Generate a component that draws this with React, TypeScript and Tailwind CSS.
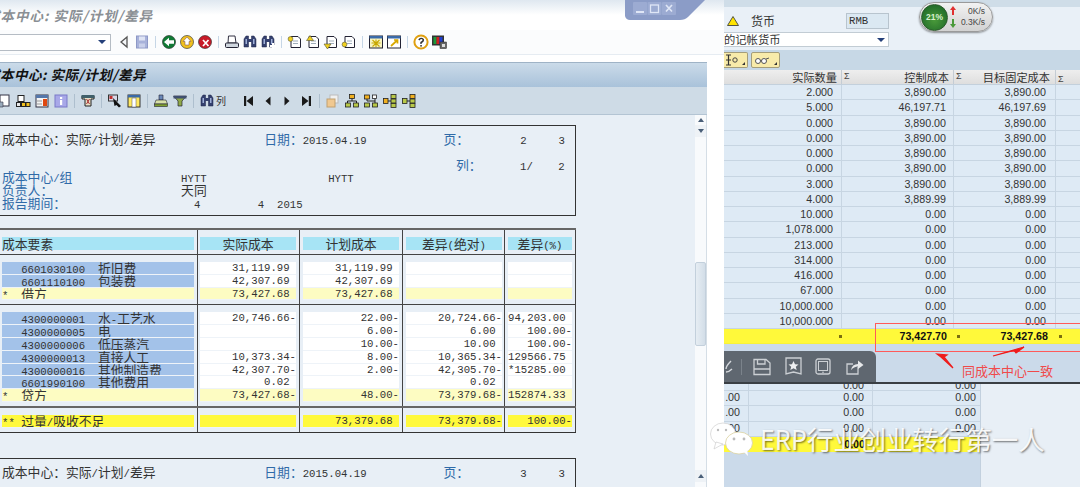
import React from "react";

const MONO = "font-['Liberation_Mono','Noto_Sans_CJK_SC',monospace]";

function M({ s, c = "" }: { s: string; c?: string }) {
  const parts = s.split(/([\u3000-\u30ff\u4e00-\u9fff\uff00-\uffef]+)/);
  return (
    <>
      {parts.map((p, i) =>
        p === "" ? null : i % 2 === 1 ? (
          <span key={i} className={"text-[12.8px] font-['Noto_Sans_CJK_SC',sans-serif] " + c}>{p}</span>
        ) : (
          <span key={i} className={c}>{p}</span>
        )
      )}
    </>
  );
}

const Line = ({ children }: { children?: React.ReactNode }) => (
  <div className="h-[12.8px] leading-[12.8px] whitespace-pre text-[10.67px] text-[#333] overflow-hidden">{children}</div>
);
const BLUE = "text-[#2f6aa8]";

/* ---------- icons ---------- */
const Ic = ({ children, s = 16 }: { children: React.ReactNode; s?: number }) => (
  <svg width={s} height={s} viewBox="0 0 16 16" className="block shrink-0">{children}</svg>
);
const Back = () => <Ic><path d="M11 3 L5 8 L11 13 Z" fill="#f4f6f8" stroke="#555" strokeWidth="1.3" /></Ic>;
const Save = () => <Ic><rect x="2.5" y="2" width="11" height="12" fill="#a8b2da" stroke="#8d98c6" /><rect x="5" y="2.5" width="6" height="4" fill="#dfe4f4" /><rect x="5" y="9.5" width="6" height="4" fill="#c9d0ea" /></Ic>;
const Round = ({ f, children }: { f: string; children: React.ReactNode }) => <Ic><circle cx="8" cy="8" r="6.5" fill={f} stroke="#222" strokeWidth=".6" />{children}</Ic>;
const GreenB = () => <Round f="#107a35"><path d="M3 8 L8 3.8 V6.3 H13 V9.7 H8 V12.2 Z" fill="#fff" /></Round>;
const YellowB = () => <Round f="#f0c020"><path d="M8 3 L12 7.5 H10 V11 H6 V7.5 H4 Z" fill="#fff" stroke="#744" strokeWidth=".5" /></Round>;
const RedB = () => <Round f="#c81a28"><path d="M6 6 L11.5 12 M11.5 6 L6 12" stroke="#fff" strokeWidth="1.7" /></Round>;
const Printer = () => <Ic><path d="M4.5 2 H11 L12 9 H4 Z" fill="#fff" stroke="#334" /><rect x="1.5" y="9" width="13" height="4.5" rx="1" fill="#cfd6de" stroke="#223" /></Ic>;
const Find = ({ plus }: { plus?: boolean }) => <Ic><path d="M2 13 V5 L4 2 H6.5 V13 Z M9.5 13 V2 H12 L14 5 V13 Z" fill="#34406f" stroke="#1c2548" strokeWidth=".5" /><rect x="6" y="5" width="4" height="3" fill="#34406f" /><rect x="3.5" y="5" width="1.5" height="5" fill="#9fb0d8" /><rect x="11" y="5" width="1.5" height="5" fill="#9fb0d8" />{plus ? <path d="M10 12 H16 M13 9 V15" stroke="#fff" strokeWidth="2" /> : null}</Ic>;
const Page = ({ v }: { v: number }) => (
  <Ic>
    <path d="M4 2.5 H11 L13.5 5 V13.5 H4 Z" fill="#fff" stroke="#223" />
    <path d="M6 7 H11 M6 9.5 H11" stroke="#8899aa" strokeWidth=".8" />
    {v === 0 ? <circle cx="3.5" cy="5" r="2.4" fill="#f0d020" stroke="#553" strokeWidth=".6" /> : null}
    {v === 1 ? <path d="M5 1.5 L1.5 6.5 H8.5 Z" fill="#f0d020" stroke="#553" strokeWidth=".6" /> : null}
    {v === 2 ? <path d="M4.5 15 L1 10 H8 Z" fill="#f0d020" stroke="#553" strokeWidth=".6" /> : null}
    {v === 3 ? <circle cx="3.5" cy="10.5" r="2.4" fill="#f0d020" stroke="#553" strokeWidth=".6" /> : null}
  </Ic>
);
const Sel = () => <Ic><rect x="1.5" y="2" width="13" height="12" fill="#f8f4c0" stroke="#223" /><rect x="1.5" y="2" width="13" height="2.5" fill="#3a6aa8" /><path d="M4.5 6 L11.5 12.5 M11.5 6 L4.5 12.5 M8 5.5 V13 M3.5 9 H12.5" stroke="#c8a800" strokeWidth="1.1" /></Ic>;
const Expand = () => <Ic><rect x="1.5" y="2" width="13" height="12" fill="#fff" stroke="#223" /><rect x="1.5" y="2" width="13" height="2.5" fill="#3a6aa8" /><path d="M5 12 L11 6.5 M8 6 H11.5 V9.5" stroke="#d8a800" strokeWidth="1.7" fill="none" /></Ic>;
const Help = () => <Ic><circle cx="8" cy="8" r="6.6" fill="#fff" stroke="#e0a010" strokeWidth="2" /><path d="M5.8 6 Q8 3 10.3 5.5 Q10.5 7.5 8 8.5 V10" stroke="#333" strokeWidth="1.4" fill="none" /><rect x="7.3" y="11" width="1.5" height="1.6" fill="#333" /></Ic>;
const Layout = () => <Ic><rect x="1" y="1.5" width="12" height="10" fill="#333" /><rect x="2.5" y="3" width="3" height="7" fill="#1a9a3a" /><rect x="5.5" y="3" width="3" height="7" fill="#d02020" /><rect x="8.5" y="3" width="3" height="7" fill="#2040d0" /><rect x="9" y="8" width="6.5" height="6.5" fill="#666" stroke="#222" strokeWidth=".5" /><rect x="11" y="10" width="3" height="3" fill="#ddd" /></Ic>;

const Small = ({ k }: { k: number }) => {
  if (k === 0) return <Ic><rect x="4" y="2" width="9" height="11" fill="#fff" stroke="#334" /><path d="M1 9 h6 v5 h-6z" fill="#9ab" stroke="#334" strokeWidth=".6" /></Ic>;
  if (k === 1) return <Ic><rect x="3" y="2.5" width="6" height="6" fill="#fff" stroke="#222" /><rect x="1.5" y="9.5" width="4" height="4" fill="#e8e8e8" stroke="#222" /><rect x="6.5" y="9.5" width="4" height="4" fill="#f0c020" stroke="#222" /><rect x="11" y="9.5" width="4" height="4" fill="#f0c020" stroke="#222" /></Ic>;
  if (k === 2) return <Ic><rect x="2" y="2" width="12" height="12" fill="#f4f4f4" stroke="#334" /><rect x="2" y="2" width="12" height="3" fill="#5577aa" /><rect x="9" y="6" width="4" height="7" fill="#e04810" /><path d="M3 8 H8 M3 11 H8" stroke="#999" /></Ic>;
  if (k === 3) return <Ic><rect x="2" y="2" width="12" height="12" fill="#a8a8e8" stroke="#7a7ac8" /><rect x="7" y="4" width="2.2" height="2" fill="#fff" /><rect x="7" y="7" width="2.2" height="5" fill="#fff" /></Ic>;
  if (k === 4) return <Ic><path d="M2 3 H14 V6 H11 V13 H5 V6 H2 Z" fill="#e8e0c8" stroke="#222" /><rect x="1.5" y="2" width="13" height="3" fill="#40606a" /><path d="M6.5 6 L9.5 11 M9.5 6 L6.5 11" stroke="#a33" /></Ic>;
  if (k === 5) return <Ic><rect x="1.5" y="2" width="9" height="6" fill="#d8d8e8" stroke="#333" /><rect x="2.5" y="3" width="3" height="3" fill="#c03030" /><path d="M6 5 L14 13 L12 14.5 L9.5 12 L7.5 13 Z" fill="#111" /></Ic>;
  if (k === 6) return <Ic><rect x="2" y="2" width="12" height="12" fill="#ffe860" stroke="#333" /><rect x="2" y="2" width="12" height="2.5" fill="#3a6aa8" /><rect x="6" y="5" width="4" height="9" fill="#fff" stroke="#556" strokeWidth=".5" /></Ic>;
  if (k === 7) return <Ic><path d="M6 2 H10 V7 H6 Z" fill="#6a88b8" stroke="#223" strokeWidth=".6" /><path d="M3 7 H13 L14.5 11 H1.5 Z" fill="#d8e0a8" stroke="#223" strokeWidth=".6" /><rect x="1.5" y="11" width="13" height="2.5" fill="#80a030" stroke="#223" strokeWidth=".6" /></Ic>;
  if (k === 8) return <Ic><path d="M1.5 3 H14.5 L10 8 V13 H6 V8 Z" fill="#90a848" stroke="#223" strokeWidth=".7" /><rect x="1.5" y="3" width="13" height="2.5" fill="#405070" /></Ic>;
  if (k === 9) return <Ic><rect x="3" y="3" width="2.2" height="10" fill="#1a1a1a" /><path d="M12 3 L5.5 8 L12 13 Z" fill="#1a1a1a" /></Ic>;
  if (k === 10) return <Ic><path d="M10.5 3.5 L5.5 8 L10.5 12.5 Z" fill="#1a1a1a" /></Ic>;
  if (k === 11) return <Ic><path d="M5.5 3.5 L10.5 8 L5.5 12.5 Z" fill="#1a1a1a" /></Ic>;
  if (k === 12) return <Ic><rect x="10.8" y="3" width="2.2" height="10" fill="#1a1a1a" /><path d="M4 3 L10.5 8 L4 13 Z" fill="#1a1a1a" /></Ic>;
  if (k === 13) return <Ic><rect x="5" y="2" width="8" height="8" fill="#f0f0f0" stroke="#bbb" /><rect x="2" y="6" width="8" height="8" fill="#f0c890" stroke="#c0a070" /></Ic>;
  if (k === 14) return <Ic><rect x="5.5" y="1.5" width="5" height="4" fill="#f0b020" stroke="#222" strokeWidth=".8" /><path d="M8 5.5 V8 M3.5 10 V8 H12.5 V10" stroke="#222" fill="none" /><rect x="1.5" y="10" width="5" height="4" fill="#b8c848" stroke="#222" strokeWidth=".8" /><rect x="9.5" y="10" width="5" height="4" fill="#b8c848" stroke="#222" strokeWidth=".8" /></Ic>;
  if (k === 15) return <Ic><rect x="1.5" y="2" width="5" height="4" fill="#f0b020" stroke="#222" strokeWidth=".8" /><rect x="9.5" y="2" width="4" height="3.5" fill="#fff" stroke="#222" strokeWidth=".8" /><path d="M4 6 V8 H12 V6 M12 8 V10" stroke="#222" fill="none" /><rect x="1.5" y="10" width="5" height="4" fill="#b8c848" stroke="#222" strokeWidth=".8" /><rect x="9.5" y="10" width="5" height="4" fill="#b8c848" stroke="#222" strokeWidth=".8" /></Ic>;
  const o = k === 16;
  return <Ic><rect x="1.5" y="5.5" width="4.5" height="5" fill={o ? "#f0b020" : "#b8c848"} stroke="#222" strokeWidth=".8" /><rect x="9" y="1.5" width="5" height="4" fill={o ? "#b8c848" : "#f0b020"} stroke="#222" strokeWidth=".8" /><rect x="9" y="6" width="5" height="4" fill="#b8c848" stroke="#222" strokeWidth=".8" /><rect x="9" y="10.5" width="5" height="4" fill="#b8c848" stroke="#222" strokeWidth=".8" /><path d="M6 8 H9" stroke="#222" /></Ic>;
};

const Slot = ({ children }: { children: React.ReactNode }) => <div className="w-[18px] flex justify-center shrink-0">{children}</div>;
const Slot2 = ({ children }: { children: React.ReactNode }) => <div className="w-[19px] flex justify-center shrink-0">{children}</div>;
const Sep = () => <div className="w-[9px] flex justify-center shrink-0"><div className="w-px h-[12px] bg-[#c6d6e6]" /></div>;
const Sep2 = () => <div className="w-[8px] flex justify-center shrink-0"><div className="w-px h-[14px] bg-[#aebfce]" /></div>;

/* ---------- report table ---------- */
type Kind = "b" | "w" | "l" | "y";
const KIND: Record<Kind, string> = {
  b: "bg-[#a3c2e9]",
  w: "bg-white",
  l: "bg-[#fdfcc2]",
  y: "bg-[#fff93c]",
};
const COLS = [
  "w-[198px] pl-[2px] pr-[3px]",
  "w-[102px] pl-[2px] pr-[3px]",
  "w-[103px] pl-[3px] pr-[3px]",
  "w-[102px] pl-[3px] pr-[2px]",
  "w-[71px] pl-[3px] pr-[3px]",
];
type R = { k: Kind; c: string[] };
function Sect({ rows, last }: { rows: R[]; last: string }) {
  return (
    <div className={"flex " + last}>
      {COLS.map((cw, ci) => (
        <div key={ci} className={"shrink-0 border-r border-[#444] pt-[7px] pb-[4px] " + cw}>
          {rows.map((r, ri) => {
            const k: Kind = ci === 0 && r.k === "w" ? "b" : r.k;
            return (
              <div
                key={ri}
                className={
                  "h-[12.8px] leading-[12.4px] whitespace-pre text-[10.67px] text-[#333] overflow-hidden border-b border-[#eef3f8] " +
                  KIND[k] +
                  (ci === 0 ? " text-left" : " text-right")
                }
              >
                <M s={r.c[ci] ?? ""} />
              </div>
            );
          })}
        </div>
      ))}
    </div>
  );
}

const HeadCell = ({ cw, t, left }: { cw: string; t: string; left?: boolean }) => (
  <div className={"shrink-0 border-r border-[#444] pt-[7px] pb-[4px] " + cw}>
    <div className={"h-[13px] leading-[13px] text-[10.67px] text-[#333] whitespace-pre bg-[#a7e4f5] " + (left ? "text-left" : "text-center")}><M s={t} /></div>
  </div>
);

const sp = (n: number) => " ".repeat(n);

const Head = ({ page }: { page: string }) => (
  <Line>
    <M s="成本中心：实际/计划/差异" />
    {sp(17)}
    <M s="日期：" c={BLUE} />
    <M s={"2015.04.19" + sp(12)} />
    <M s="页：" c={BLUE} />
    <M s={sp(8) + page + sp(5) + "3"} />
  </Line>
);

/* ---------- right table ---------- */
const TOP: [string, string, string][] = [
  ["2.000", "3,890.00", "3,890.00"],
  ["5.000", "46,197.71", "46,197.69"],
  ["0.000", "3,890.00", "3,890.00"],
  ["0.000", "3,890.00", "3,890.00"],
  ["0.000", "3,890.00", "3,890.00"],
  ["0.000", "3,890.00", "3,890.00"],
  ["3.000", "3,890.00", "3,890.00"],
  ["4.000", "3,889.99", "3,889.99"],
  ["10.000", "0.00", "0.00"],
  ["1,078.000", "0.00", "0.00"],
  ["213.000", "0.00", "0.00"],
  ["314.000", "0.00", "0.00"],
  ["416.000", "0.00", "0.00"],
  ["67.000", "0.00", "0.00"],
  ["10,000.000", "0.00", "0.00"],
  ["10,000.000", "0.00", "0.00"],
];
const Dot = () => <div className="w-[3px] h-[3px] bg-[#7a6f10]" />;
const Sigma = () => <span className="text-[9px] text-[#444] font-['Liberation_Mono',monospace]">Σ</span>;

export default function App() {
  return (
    <div className="relative w-[1080px] h-[487px] overflow-hidden flex bg-white font-['Noto_Sans_CJK_SC',sans-serif]">
      {/* LEFT WINDOW */}
      <div className="w-[724px] shrink-0 h-full flex flex-col bg-white overflow-hidden">
        <div className="h-[30px] shrink-0 pt-[2px] bg-gradient-to-b from-[#dfe8f0] via-white to-white flex items-center overflow-hidden">
          <span className="ml-[-14px] text-[13.5px] leading-none font-bold italic text-[#8a8f94] whitespace-pre tracking-[1px]">成本中心: 实际/计划/差异</span>
        </div>
        <div className="h-[25px] shrink-0 bg-[#fbfcfd] border-b border-[#e6ecf2] flex items-center">
          <div className="w-[111px] h-[17px] bg-white border border-[#b5bcc4] border-l-0 flex items-center justify-end pr-[4px] shrink-0">
            <div className="w-0 h-0 border-l-[4px] border-r-[4px] border-t-[4px] border-l-transparent border-r-transparent border-t-[#25407a]" />
          </div>
          <div className="ml-[4px] flex items-center">
            <Slot><Back /></Slot><Slot><Save /></Slot><Sep />
            <Slot><GreenB /></Slot><Slot><YellowB /></Slot><Slot><RedB /></Slot><Sep />
            <Slot><Printer /></Slot><Slot><Find /></Slot><Slot><Find plus /></Slot><Sep />
            <Slot><Page v={0} /></Slot><Slot><Page v={1} /></Slot><Slot><Page v={2} /></Slot><Slot><Page v={3} /></Slot><Sep />
            <Slot><Sel /></Slot><Slot><Expand /></Slot><Sep />
            <Slot><Help /></Slot><Slot><Layout /></Slot>
          </div>
        </div>
        <div className="h-[7px] shrink-0 bg-white" />
        <div className="flex-1 min-h-0 w-[707px] flex flex-col border-t border-[#9fb3c6]">
          <div className="h-[24px] shrink-0 bg-gradient-to-b from-[#cbdbe9] to-[#a9c2da] flex items-center overflow-hidden">
            <span className="ml-[-14px] text-[13.5px] leading-none font-bold italic text-[#111] whitespace-pre tracking-[0.5px]">成本中心: 实际/计划/差异</span>
          </div>
          <div className="h-[28px] shrink-0 bg-[#cedbe6] border-b border-[#b3c4d3] flex items-center">
            <div className="ml-[-6px] flex items-center">
              <Slot2><Small k={0} /></Slot2><Slot2><Small k={1} /></Slot2><Slot2><Small k={2} /></Slot2><Slot2><Small k={3} /></Slot2><Sep2 />
              <Slot2><Small k={4} /></Slot2><Sep2 />
              <Slot2><Small k={5} /></Slot2><Slot2><Small k={6} /></Slot2><Sep2 />
              <Slot2><Small k={7} /></Slot2><Slot2><Small k={8} /></Slot2><Sep2 />
              <Slot2><Find /></Slot2>
              <span className="text-[10px] text-[#333] w-[14px] shrink-0">列</span>
              <div className="ml-[9px] flex items-center">
                <Slot2><Small k={9} /></Slot2><Slot2><Small k={10} /></Slot2><Slot2><Small k={11} /></Slot2><Slot2><Small k={12} /></Slot2><Sep2 />
                <Slot2><Small k={13} /></Slot2><Slot2><Small k={14} /></Slot2><Slot2><Small k={15} /></Slot2><Slot2><Small k={16} /></Slot2><Slot2><Small k={17} /></Slot2>
              </div>
            </div>
          </div>
          <div className="flex-1 min-h-0 flex">
            <div className={"w-[695px] shrink-0 bg-[#e8eff6] pt-[10px] overflow-hidden " + MONO}>
              <div className="w-[576px] h-[91px] border-t border-b border-r border-[#333] pl-[2px] pt-[7px]">
                <Head page="2" />
                <Line />
                <Line>
                  {sp(71)}
                  <M s="列：" c={BLUE} />
                  <M s={sp(6) + "1/" + sp(4) + "2"} />
                </Line>
                <Line>
                  <M s="成本中心/组" c={BLUE} />
                  <M s={sp(17) + "HYTT" + sp(19) + "HYTT"} />
                </Line>
                <Line>
                  <M s="负责人：" c={BLUE} />
                  <M s={sp(20) + "天同"} />
                </Line>
                <Line>
                  <M s="报告期间：" c={BLUE} />
                  <M s={sp(20) + "4" + sp(9) + "4" + sp(2) + "2015"} />
                </Line>
              </div>

              <div className="w-[576px] mt-[12px] border-t-2 border-[#666]">
                <div className="flex border-b border-[#444]">
                  <HeadCell cw={COLS[0]} t="成本要素" left />
                  <HeadCell cw={COLS[1]} t="实际成本" />
                  <HeadCell cw={COLS[2]} t="计划成本" />
                  <HeadCell cw={COLS[3]} t="差异(绝对)" />
                  <HeadCell cw={COLS[4]} t="差异(%)" />
                </div>
                <Sect
                  last="border-b border-[#444]"
                  rows={[
                    { k: "w", c: ["   6601030100  折旧费", "31,119.99 ", "31,119.99 "] },
                    { k: "w", c: ["   6601110100  包装费", "42,307.69 ", "42,307.69 "] },
                    { k: "l", c: ["*  借方", "73,427.68 ", "73,427.68 "] },
                  ]}
                />
                <Sect
                  last="border-b-2 border-[#666]"
                  rows={[
                    { k: "w", c: ["   4300000001  水-工艺水", "20,746.66-", "22.00-", "20,724.66-", "94,203.00 "] },
                    { k: "w", c: ["   4300000005  电", "", "6.00-", "6.00 ", "100.00-"] },
                    { k: "w", c: ["   4300000006  低压蒸汽", "", "10.00-", "10.00 ", "100.00-"] },
                    { k: "w", c: ["   4300000013  直接人工", "10,373.34-", "8.00-", "10,365.34-", "129566.75 "] },
                    { k: "w", c: ["   4300000016  其他制造费", "42,307.70-", "2.00-", "42,305.70-", "*15285.00 "] },
                    { k: "w", c: ["   6601990100  其他费用", "0.02 ", "", "0.02 ", ""] },
                    { k: "l", c: ["*  贷方", "73,427.68-", "48.00-", "73,379.68-", "152874.33 "] },
                  ]}
                />
                <Sect
                  last="border-b border-[#333]"
                  rows={[{ k: "y", c: ["** 过量/吸收不足", "", "73,379.68 ", "73,379.68-", "100.00-"] }]}
                />
              </div>

              <div className="w-[576px] mt-[25px] border-t border-r border-[#333] pl-[2px] pt-[7px] h-[40px]">
                <Head page="3" />
              </div>
            </div>
            {/* scrollbar */}
            <div className="w-[12px] shrink-0 bg-[#f8fafc] border-r border-[#d5dee6] flex flex-col items-center">
              <div className="h-[10px] w-full flex items-center justify-center"><div className="w-0 h-0 border-l-[3px] border-r-[3px] border-b-[4px] border-l-transparent border-r-transparent border-b-[#4a5f78]" /></div>
              <div className="h-[12px] w-full bg-[#eef2f6] flex items-center justify-center"><div className="w-0 h-0 border-l-[3px] border-r-[3px] border-t-[4px] border-l-transparent border-r-transparent border-t-[#4a5f78]" /></div>
              <div className="h-[125px] w-full" />
              <div className="h-[84px] w-full bg-gradient-to-r from-[#e6edf3] to-[#d3dee8] border border-[#c3d0dc] rounded-[2px]" />
              <div className="h-[124px] w-full" />
              <div className="h-[12px] w-full bg-[#eef2f6] flex items-center justify-center"><div className="w-0 h-0 border-l-[3px] border-r-[3px] border-b-[4px] border-l-transparent border-r-transparent border-b-[#4a5f78]" /></div>
            </div>
          </div>
        </div>
      </div>

      {/* RIGHT WINDOW */}
      <div className="flex-1 min-w-0 h-full flex flex-col bg-[#e9f0f7] overflow-hidden">
        <div className="h-[7px] shrink-0 bg-[#cfdde8]" />
        <div className="h-[25px] shrink-0 pt-[3px] flex items-center">
          <svg width="14" height="12" viewBox="0 0 14 12" className="ml-[2px] shrink-0 block"><path d="M7 1.5 L12.5 10.5 H1.5 Z" fill="#ffe400" stroke="#554" strokeWidth="1" /></svg>
          <span className="ml-[11px] w-[95px] text-[12px] leading-none text-[#333]">货币</span>
          <div className="w-[43px] h-[16px] bg-[#dbe8f2] border border-[#b8c4ce] text-[10.67px] leading-[14px] pl-[2px] text-[#333] font-['Liberation_Mono',monospace]">RMB</div>
        </div>
        <div className="h-[15px] w-[165px] shrink-0 bg-white border border-[#c2ccd4] border-l-0 flex items-center justify-between pr-[3px]">
          <span className="text-[11.3px] leading-none text-[#333] whitespace-pre">的记帐货币</span>
          <div className="w-0 h-0 border-l-[4px] border-r-[4px] border-t-[4px] border-l-transparent border-r-transparent border-t-[#25407a]" />
        </div>
        <div className="h-[20px] mt-[3px] shrink-0 bg-[#c7d8e6] flex items-center gap-[3px]">
          <div className="relative w-[24px] h-[16px] bg-[#f8ebaa] border border-[#a49d7a] border-l-0 rounded-r-[2px] flex items-center pl-[1px]">
            <svg width="14" height="12" viewBox="0 0 14 12" className="block"><path d="M1 1 H6 M3.5 1 V11 M1 6 H6 M1 11 H6" stroke="#333" strokeWidth="1.2" /><circle cx="10" cy="6" r="2.2" fill="none" stroke="#444" /></svg>
            <div className="absolute right-[2px] bottom-[2px] w-0 h-0 border-l-[3px] border-b-[3px] border-l-transparent border-b-[#333]" />
          </div>
          <div className="relative w-[29px] h-[16px] bg-[#f8ebaa] border border-[#a49d7a] rounded-[2px] flex items-center pl-[2px]">
            <svg width="16" height="10" viewBox="0 0 16 10" className="block"><circle cx="4" cy="6" r="2.5" fill="#fff" stroke="#555" /><circle cx="10" cy="6" r="2.5" fill="#fff" stroke="#555" /><path d="M6.5 5.5 H7.5 M12 4 L15 3" stroke="#555" fill="none" /></svg>
            <div className="absolute right-[2px] bottom-[2px] w-0 h-0 border-l-[3px] border-b-[3px] border-l-transparent border-b-[#333]" />
          </div>
        </div>
        {/* grid header */}
        <div className="h-[15px] shrink-0 flex bg-gradient-to-b from-[#eeeeee] to-[#dedede] border-b border-[#c3d0dc] text-[11.2px] leading-[15px] text-[#333]">
          <div className="w-[118px] shrink-0 border-r border-[#c4ccd4] text-right pr-[4px]">实际数量</div>
          <div className="w-[112px] shrink-0 border-r border-[#c4ccd4] flex justify-between pr-[4px] pl-[2px]"><Sigma /><span>控制成本</span></div>
          <div className="w-[102px] shrink-0 border-r border-[#c4ccd4] flex justify-between pr-[5px] pl-[2px]"><Sigma /><span>目标固定成本</span></div>
          <div className="flex-1 pl-[2px]"><Sigma /></div>
        </div>
        {/* grid rows */}
        <div className="shrink-0 font-['Liberation_Sans',sans-serif] text-[10.7px] text-[#333]">
          {TOP.map((r, i) => (
            <div key={i} className="h-[15.25px] leading-[15px] flex bg-[#deeaf5] border-b border-[#c7d5e2]">
              <div className="w-[118px] shrink-0 border-r border-[#c7d5e2] text-right pr-[8px]">{r[0]}</div>
              <div className="w-[112px] shrink-0 border-r border-[#c7d5e2] text-right pr-[7px]">{r[1]}</div>
              <div className="w-[102px] shrink-0 border-r border-[#c7d5e2] text-right pr-[9px]">{r[2]}</div>
              <div className="flex-1" />
            </div>
          ))}
          <div className="h-[15px] flex bg-[#fff93a] font-bold text-[#111] leading-[15px]">
            <div className="w-[118px] shrink-0 flex items-center justify-end"><Dot /></div>
            <div className="w-[112px] shrink-0 flex items-center justify-between pr-[7px] pl-[2px]"><span className="w-[3px]" /><span>73,427.70</span></div>
            <div className="w-[102px] shrink-0 flex items-center justify-between pr-[8px] pl-[3px]"><Dot /><span>73,427.68</span></div>
            <div className="flex-1 flex items-center pl-[3px]"><Dot /></div>
          </div>
        </div>
        <div className="h-[40px] shrink-0 bg-[#cbdaea] border-b-2 border-[#3a3f44] shadow-[0_1px_2px_rgba(0,0,0,0.4)]" />
        {/* lower area */}
        <div className="flex-1 min-h-0 flex">
          <div className="w-[257px] shrink-0 h-full bg-[#cbdaea] border-r border-[#c2d0de] font-['Liberation_Sans',sans-serif] text-[10.7px] text-[#333]">
            <div className="h-[7px] leading-[2px] flex bg-[#dde9f4] border-b border-[#c7d5e2] overflow-hidden">
              <div className="w-[25px] shrink-0 border-r border-[#c7d5e2]" />
              <div className="w-[124px] shrink-0 border-r border-[#c7d5e2] text-right pr-[8px]">0.00</div>
              <div className="flex-1 text-right pr-[4px]">0.00</div>
            </div>
            {["a", "b", "c"].map((k) => (
              <div key={k} className="h-[15.25px] leading-[13px] flex bg-[#dde9f4] border-b border-[#c7d5e2]">
                <div className="w-[25px] shrink-0 border-r border-[#c7d5e2] text-right pr-[8px] overflow-hidden whitespace-pre">.00</div>
                <div className="w-[124px] shrink-0 border-r border-[#c7d5e2] text-right pr-[8px]">0.00</div>
                <div className="flex-1 text-right pr-[4px]">0.00</div>
              </div>
            ))}
            <div className="h-[15px] leading-[15px] flex bg-[#fff93a] font-bold text-[#111]">
              <div className="w-[25px] shrink-0 flex items-center justify-end pr-[1px]"><Dot /></div>
              <div className="w-[124px] shrink-0 text-right pr-[8px]">0.00</div>
              <div className="flex-1" />
            </div>
          </div>
          <div className="flex-1 bg-[#e8eff6]" />
        </div>
      </div>

      {/* window buttons */}
      <div className="absolute left-[625px] top-0">
        <svg width="82" height="21" viewBox="0 0 82 21" className="block">
          <path d="M0 0 H80 L63 17 Q60 20 55 20 H5 Q1 20 0 16 Z" fill="#8b9cc7" />
          <rect x="8" y="2" width="14" height="13" rx="1" fill="#9cabd2" />
          <rect x="22.5" y="2" width="14" height="13" rx="1" fill="#9cabd2" />
          <rect x="37" y="2" width="14" height="13" rx="1" fill="#9cabd2" />
          <rect x="11" y="11" width="8" height="2" fill="#dfe6f6" />
          <rect x="25.5" y="5" width="8" height="7.5" fill="none" stroke="#dfe6f6" strokeWidth="1.3" />
          <path d="M41 5 L47 11.5 M47 5 L41 11.5" stroke="#dfe6f6" strokeWidth="1.7" />
        </svg>
      </div>

      {/* network widget */}
      <div className="absolute left-[919px] top-[2px] w-[74px] h-[30px] rounded-full bg-gradient-to-b from-[#f2f2f2] to-[#d2d2d2] border border-[#9a9a9a] shadow-[0_1px_2px_rgba(0,0,0,0.4)] flex items-center">
        <div className="ml-[1px] w-[27px] h-[27px] rounded-full bg-[radial-gradient(circle_at_50%_60%,#4a9a3a,#155f25)] border border-[#2c5a2c] flex items-center justify-center text-[8.5px] font-bold text-[#d8f0d0] font-['Liberation_Sans',sans-serif]">21%</div>
        <div className="ml-[1px] flex flex-col gap-[1px] w-[7px] items-center">
          <svg width="6" height="9" viewBox="0 0 6 9" className="block"><path d="M3 0 L6 4 H4 V9 H2 V4 H0 Z" fill="#e03030" /></svg>
          <svg width="6" height="9" viewBox="0 0 6 9" className="block mt-[3px]"><path d="M3 9 L6 5 H4 V0 H2 V5 H0 Z" fill="#4a9a3a" /></svg>
        </div>
        <div className="flex-1 pr-[7px] text-right text-[8.5px] leading-[11px] text-[#444] font-['Liberation_Sans',sans-serif]">
          <div>0K/s</div>
          <div>0.3K/s</div>
        </div>
      </div>

      {/* dark share toolbar */}
      <div className="absolute left-[724px] top-[351px] w-[152px] h-[31px] bg-[#5f6770] rounded-tr-[6px] flex items-center text-[#c9ced3]">
        <svg width="8" height="16" viewBox="0 0 8 16" className="ml-[1px] block"><path d="M6 2 Q1 7 1 10 M1 13 Q4 13 7 10" stroke="#d5d9dd" strokeWidth="1.4" fill="none" /></svg>
        <div className="ml-[8px] w-px h-[16px] bg-[#7b838b]" />
        <svg width="18" height="18" viewBox="0 0 18 18" className="ml-[11px] block"><path d="M1 1.5 H13 L17 5 V16.5 H1 Z M4.5 1.5 V6 H12 V1.5 M1 11 H17" fill="none" stroke="#ccd0d4" strokeWidth="1.3" /></svg>
        <svg width="17" height="19" viewBox="0 0 17 19" className="ml-[14px] block"><path d="M1 1 H16 V17 L8.5 15 L1 17 Z" fill="none" stroke="#ccd0d4" strokeWidth="1.3" /><path d="M8.5 4 L10 7.3 L13.5 7.6 L10.8 9.8 L11.7 13 L8.5 11.2 L5.3 13 L6.2 9.8 L3.5 7.6 L7 7.3 Z" fill="#eef0f2" /></svg>
        <svg width="16" height="17" viewBox="0 0 16 17" className="ml-[13px] block"><rect x="1" y="1" width="14" height="15" rx="2" fill="none" stroke="#ccd0d4" strokeWidth="1.3" /><rect x="3.5" y="3.5" width="9" height="9" fill="none" stroke="#ccd0d4" /><circle cx="8" cy="14.3" r=".8" fill="#ccd0d4" /></svg>
        <svg width="18" height="16" viewBox="0 0 18 16" className="ml-[15px] block"><path d="M12 8 V15 H1 V5 H7" fill="none" stroke="#ccd0d4" strokeWidth="1.3" /><path d="M5 11 Q6 5 12 5 V1.5 L17.5 6 L12 10 V7.5 Q8 7.5 5 11 Z" fill="#e6e8ea" /></svg>
      </div>

      {/* red annotation */}
      <div className="absolute left-[875px] top-[323px] w-[210px] h-[29px] border border-[#ff5a5a]" />
      <svg width="100" height="30" viewBox="0 0 100 30" className="absolute left-[935px] top-[345px] block">
        <path d="M18 23 L6 12 L2 9 L12 10 L9 12 Z" fill="#ee1c1c" stroke="#ee1c1c" strokeWidth="1.2" />
        <path d="M58 11 L82 4 L89 2 L81 8 L79 5.5 Z" fill="#ee1c1c" stroke="#ee1c1c" strokeWidth="1.2" />
      </svg>
      <div className="absolute left-[962px] top-[362px] text-[13px] leading-[18px] text-[#f04a4a] whitespace-pre">同成本中心一致</div>

      {/* watermark */}
      <svg width="44" height="36" viewBox="0 0 44 36" className="absolute left-[710px] top-[421px] block">
        <ellipse cx="13" cy="13" rx="12.5" ry="11" fill="#fff" stroke="#d0d0d0" strokeWidth=".7" />
        <path d="M6 21 L4 28 L13 23 Z" fill="#fff" stroke="#d0d0d0" strokeWidth=".7" />
        <ellipse cx="29" cy="22" rx="13.5" ry="11" fill="#fff" stroke="#d9d0a0" strokeWidth=".8" />
        <path d="M34 31 L38 35 L37 28 Z" fill="#fff" />
        <circle cx="24" cy="18" r="1.4" fill="#bbb" />
        <circle cx="34" cy="18" r="1.4" fill="#bbb" />
        <circle cx="8" cy="9" r="1.2" fill="#bbb" />
        <circle cx="16" cy="9" r="1.2" fill="#bbb" />
      </svg>
      <div className="absolute left-[760px] top-[421px] text-[26.4px] leading-[38px] text-white/90 whitespace-pre font-['Noto_Sans','Noto_Sans_CJK_SC',sans-serif] [text-shadow:1px_1px_2px_rgba(0,0,0,0.55)]">ERP行业创业转行第一人</div>
    </div>
  );
}
